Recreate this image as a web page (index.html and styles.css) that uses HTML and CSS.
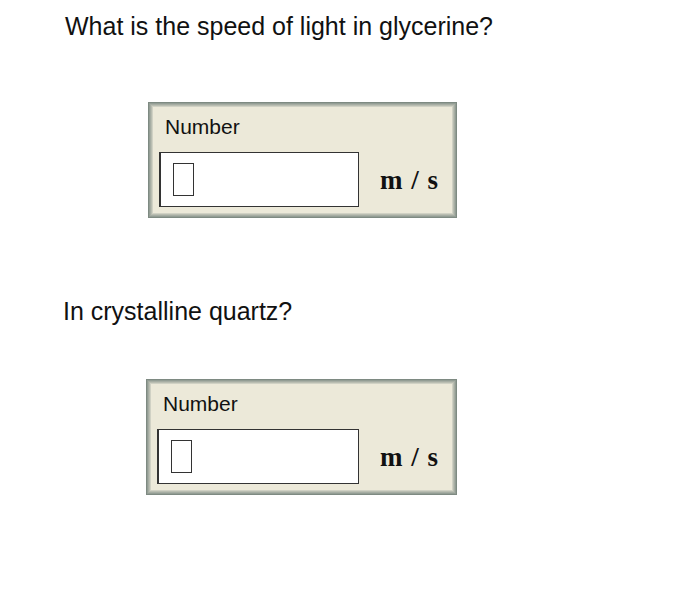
FILE: index.html
```html
<!DOCTYPE html>
<html lang="en">

<head>
    <meta charset="UTF-8">
    <meta name="viewport" content="width=device-width, initial-scale=1.0">
    <title>speed of light</title>
    <link rel="stylesheet" href="styles.css">
</head>

<body>
    <section class="sheet">
        <!-- part 1 -->
        <div class="question first">
            <p class="prompt">What is the speed of light in glycerine?</p>
            <div class="answer">
                <div class="label">Number</div>
                <div class="row">
                    <div class="field"><span class="caret"></span></div>
                    <span class="unit">m / s</span>
                </div>
            </div>
        </div>

        <!-- part 2 -->
        <div class="question second">
            <p class="prompt">In crystalline quartz?</p>
            <div class="answer">
                <div class="label">Number</div>
                <div class="row">
                    <div class="field"><span class="caret"></span></div>
                    <span class="unit">m / s</span>
                </div>
            </div>
        </div>
    </section>
</body>

</html>
```

FILE: styles.css
```css
* {
    box-sizing: border-box;
}

body {
    margin: 0;
    background-color: white;
    font-family: "Liberation Sans", Arial, sans-serif;
    color: #111;
}

.sheet {
    padding-top: 12px;
}

.prompt {
    margin: 0;
    font-size: 25px;
    line-height: 29px;
}

.first .prompt {
    padding-left: 65px;
}

.first .answer {
    margin: 61px 0 0 148px;
    width: 309px;
}

.second {
    margin-top: 79px;
}

.second .prompt {
    padding-left: 63px;
}

.second .answer {
    margin: 53px 0 0 146px;
    width: 311px;
}

.second .field {
    width: 202px;
}

.answer {
    height: 116px;
    padding: 12px 6px 6px 10px;
    background-color: #ece9d9;
    border: 1px solid #7e8a82;
    box-shadow: inset 0 0 0 1px #939d94,
        inset 0 0 0 2px #a6ada3,
        inset 0 0 0 3px #b9bdb1,
        inset 0 0 0 4px #d0d1c4;
}

.label {
    margin-left: 6px;
    font-size: 21px;
    line-height: 24px;
}

.row {
    display: flex;
    align-items: center;
    margin-top: 13px;
}

.field {
    width: 200px;
    height: 55px;
    padding: 10px 12px;
    background-color: white;
    border: 1px solid #333;
    border-left-width: 2px;
}

.caret {
    display: block;
    width: 21px;
    height: 33px;
    border: 1px solid #333;
}

.unit {
    margin: 2px 0 0 21px;
    font-family: "Liberation Serif", "Times New Roman", serif;
    font-weight: bold;
    font-size: 27px;
    word-spacing: 2px;
}
```
